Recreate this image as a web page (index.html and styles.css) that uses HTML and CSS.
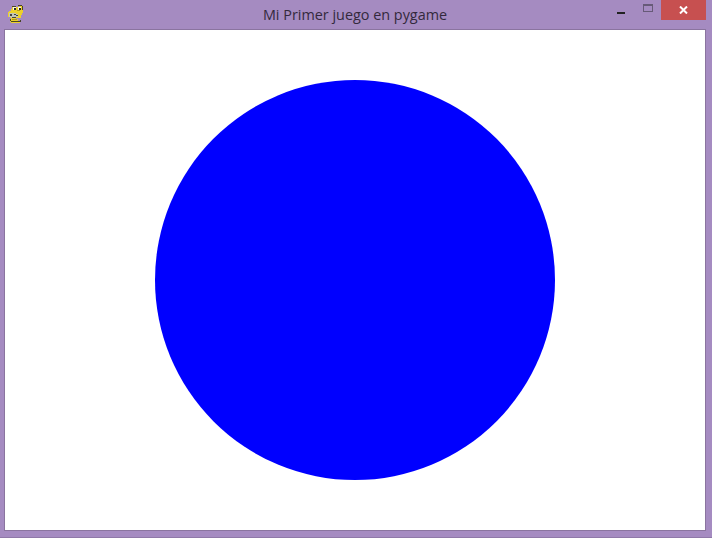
FILE: index.html
```html
<!DOCTYPE html>
<html lang="es">
<head>
<meta charset="utf-8">
<title>Mi Primer juego en pygame</title>
<link rel="stylesheet" href="styles.css">
</head>
<body>
<div class="window">
  <header class="titlebar">
    <svg class="app-icon" width="15" height="18" viewBox="0 0 15 18" shape-rendering="crispEdges" aria-hidden="true">
      <path d="M5 1h3v1h3V1h3v2h1v5h-1v2h-1v3H8v1h2v2h2v2H3v-1H2v-3h1v-1H2v-1H0V7h1V6h2V4h1V2h1z" fill="#ecd02a"/>
      <path d="M4 1h4v1H4zM10 0h4v1h-4zM14 1h1v4h-1zM3 16h9v1H3zM2 14h1v2H2zM12 15h1v2h-1z" fill="#4a4526"/>
      <path d="M5 2h3v3H5zM10 2h3v3h-3z" fill="#f5f5ea"/>
      <path d="M6 3h2v2H6zM11 3h2v2h-2z" fill="#2a2a24"/>
      <path d="M1 8h7v1h2v3H8v1H3v-1H1z" fill="#c3c5b8"/>
      <path d="M2 9h2v2H2zM6 9h2v1H6zM8 10h2v1H8zM4 12h4v1H4z" fill="#45453f"/>
      <path d="M9 5h3v1H9zM4 14h5v1H4z" fill="#b39a1a"/>
    </svg>
    <span class="title">Mi Primer juego en pygame</span>
    <div class="controls">
      <span class="btn btn-min"><i class="min-glyph"></i></span>
      <span class="btn btn-max"><i class="max-glyph"></i></span>
      <span class="btn btn-close">
        <svg width="9" height="8" viewBox="0 0 9 8" aria-hidden="true"><path d="M1 .5l7 7M8 .5l-7 7" stroke="#fff" stroke-width="2" fill="none"/></svg>
      </span>
    </div>
  </header>
  <main class="client">
    <div class="circle"></div>
  </main>
</div>
</body>
</html>
```

FILE: styles.css
```css
html, body {
  margin: 0;
  padding: 0;
  width: 712px;
  height: 538px;
  overflow: hidden;
}

.window {
  width: 712px;
  height: 538px;
  box-sizing: border-box;
  display: flex;
  flex-direction: column;
  background: #a58bc1;
  border-bottom: 1px solid #8f78a8;
  font-family: "Open Sans", "Noto Sans", sans-serif;
}

.titlebar {
  position: relative;
  height: 29px;
  flex: none;
  display: flex;
  align-items: flex-start;
  justify-content: center;
}

.app-icon {
  position: absolute;
  left: 8px;
  top: 5px;
}

.title {
  margin-top: 5px;
  margin-right: 2px;
  font-size: 14.4px;
  line-height: 20px;
  color: #33293c;
}

.controls {
  position: absolute;
  top: 0;
  right: 6px;
  display: flex;
}

.btn {
  height: 20px;
  display: flex;
  align-items: center;
  justify-content: center;
}

.btn-min { width: 26px; }
.btn-max { width: 27px; }
.btn-close {
  width: 45px;
  background: #c75050;
}

.min-glyph {
  display: block;
  width: 8px;
  height: 2px;
  margin-top: 6px;
  background: #222;
}

.max-glyph {
  display: block;
  box-sizing: border-box;
  width: 10px;
  height: 8px;
  margin-top: -5px;
  border: 1px solid #675a78;
  border-top-width: 2px;
}

.client {
  box-sizing: content-box;
  width: 700px;
  height: 500px;
  margin-left: 4px;
  border: 1px solid #8a749f;
  background: #fff;
  display: flex;
  align-items: center;
  justify-content: center;
}

.circle {
  width: 400px;
  height: 400px;
  border-radius: 50%;
  background: #0000ff;
}
```
